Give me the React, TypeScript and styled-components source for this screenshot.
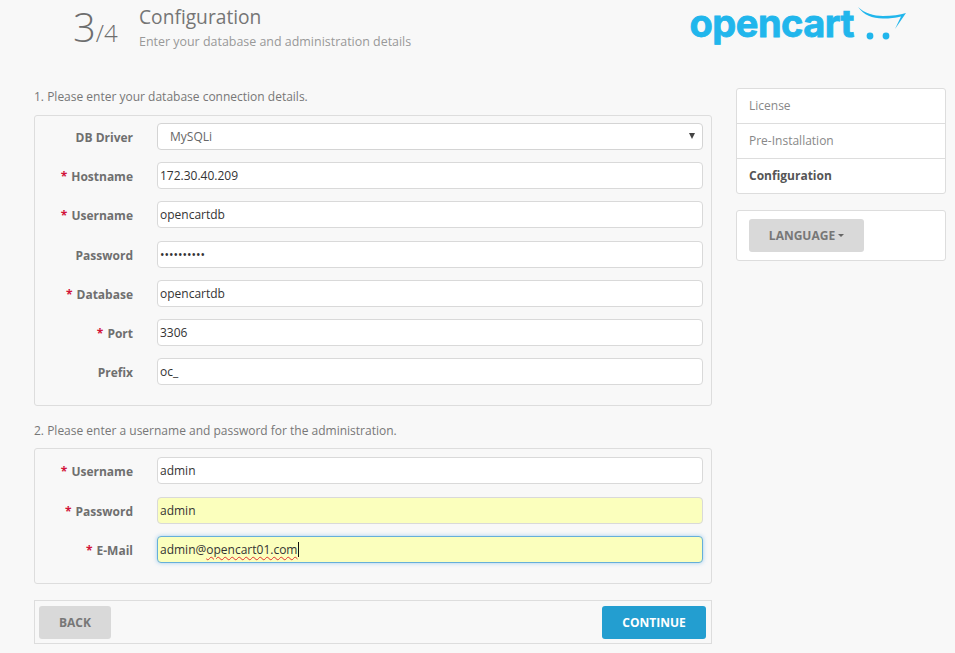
import React from "react";
import styled, { createGlobalStyle } from "styled-components";

const GlobalStyle = createGlobalStyle`
  html, body {
    margin: 0;
    padding: 0;
    background: #f8f8f8;
  }
  body {
    font-family: "Open Sans", "Liberation Sans", sans-serif;
    font-size: 12px;
    color: #666;
    overflow: hidden;
  }
  * {
    box-sizing: border-box;
  }
`;

const Page = styled.div`
  width: 955px;
  height: 653px;
  overflow: hidden;
`;

const Header = styled.header`
  display: flex;
  justify-content: space-between;
  height: 88px;
  padding: 0 49px 0 73px;
`;

const Steps = styled.div`
  display: flex;
  align-items: flex-start;
`;

const StepNumber = styled.div`
  width: 66px;
  font-size: 40px;
  line-height: 54px;
  font-weight: 300;
  color: #6e6e6e;

  small {
    font-size: 24px;
    font-weight: 300;
  }
`;

const StepText = styled.div`
  padding-top: 3px;
`;

const StepTitle = styled.h1`
  margin: 0;
  font-size: 19.2px;
  line-height: 27px;
  font-weight: 400;
  color: #757575;
`;

const StepHint = styled.p`
  margin: 3px 0 0;
  font-size: 12.45px;
  line-height: 17px;
  color: #999;
`;

const Logo = styled.div`
  display: flex;
  align-items: flex-start;
`;

const LogoText = styled.span`
  font-family: "Inter", "Lato", sans-serif;
  font-size: 38px;
  line-height: 46px;
  font-weight: 700;
  letter-spacing: -0.5px;
  color: #21b6ec;
  -webkit-text-stroke: 0.8px #21b6ec;
`;

const Content = styled.div`
  display: grid;
  grid-template-columns: 678px 210px;
  column-gap: 24px;
  padding-left: 34px;
`;

const Main = styled.main`
  display: flex;
  flex-direction: column;
`;

const Legend = styled.p<{ $height: number }>`
  margin: 0;
  height: ${(p) => p.$height}px;
  font-size: 12px;
  line-height: 18px;
  color: #777;
`;

const Fieldset = styled.div<{
  $gap: number;
  $padTop: number;
  $padBottom: number;
  $mb: number;
}>`
  display: flex;
  flex-direction: column;
  gap: ${(p) => p.$gap}px;
  margin-bottom: ${(p) => p.$mb}px;
  padding: ${(p) => p.$padTop}px 8px ${(p) => p.$padBottom}px 0;
  border: 1px solid #ddd;
  border-radius: 3px;
`;

const Row = styled.div`
  display: grid;
  grid-template-columns: 98px 546px;
  column-gap: 24px;
  align-items: center;
`;

const Label = styled.label`
  padding-top: 2px;
  text-align: right;
  font-size: 12px;
  font-weight: 700;
  color: #6f6f6f;
`;

const Star = styled.span`
  color: #d2143a;
  margin-right: 4px;
`;

const Input = styled.input<{ $autofill?: boolean }>`
  display: block;
  width: 100%;
  height: 27px;
  padding: 0 2px;
  font: 12px "Open Sans", sans-serif;
  color: #333;
  background: ${(p) => (p.$autofill ? "#fbffbd" : "#fff")};
  border: 1px solid #d9d9d9;
  border-radius: 4px;
  outline: none;
`;

const SelectBox = styled.div`
  position: relative;
  height: 27px;
  padding-left: 12px;
  font-size: 12px;
  line-height: 26px;
  color: #666;
  background: #fff;
  border: 1px solid #d4d4d4;
  border-radius: 4px;

  &::after {
    content: "";
    position: absolute;
    top: 9px;
    right: 7px;
    border-style: solid;
    border-width: 6px 3px 0;
    border-color: #444 transparent transparent;
  }
`;

const FocusedField = styled.div`
  height: 27px;
  padding: 0 2px;
  font-size: 12px;
  line-height: 25px;
  color: #333;
  background: #fbffbd;
  border: 1px solid #66afd9;
  border-radius: 4px;
  box-shadow: 0 0 4px rgba(102, 175, 233, 0.6);
  white-space: nowrap;
`;

const Misspelled = styled.span`
  text-decoration: underline wavy #e03030 1px;
  text-underline-offset: 2px;
`;

const Caret = styled.span`
  display: inline-block;
  width: 1px;
  height: 15px;
  margin-left: 1px;
  vertical-align: -3px;
  background: #111;
`;

const Actions = styled.div`
  display: flex;
  justify-content: space-between;
  height: 44px;
  padding: 5px 5px 0 4px;
  border: 1px solid #ddd;
`;

const Button = styled.button<{ $primary?: boolean }>`
  height: 33px;
  width: ${(p) => (p.$primary ? 104 : 72)}px;
  padding: 0;
  font: 700 12px "Open Sans", sans-serif;
  color: ${(p) => (p.$primary ? "#fff" : "#777")};
  background: ${(p) => (p.$primary ? "#239ed0" : "#d9d9d9")};
  border: 0;
  border-radius: 3px;
`;

const Side = styled.aside`
  display: flex;
  flex-direction: column;
  gap: 16px;
`;

const Steplist = styled.ul`
  margin: 0;
  padding: 0;
  list-style: none;
  background: #fff;
  border: 1px solid #ddd;
  border-radius: 3px;
`;

const StepItem = styled.li<{ $active?: boolean }>`
  height: 35px;
  padding-left: 12px;
  font-size: 12px;
  line-height: 34px;
  font-weight: ${(p) => (p.$active ? 700 : 400)};
  color: ${(p) => (p.$active ? "#555" : "#888")};
  border-top: 1px solid #ddd;

  &:first-child {
    height: 34px;
    border-top: 0;
  }
`;

const LanguageBox = styled.div`
  height: 51px;
  padding: 8px 12px;
  background: #fff;
  border: 1px solid #ddd;
  border-radius: 3px;
`;

const LanguageButton = styled(Button)`
  display: flex;
  align-items: center;
  justify-content: center;
  gap: 3px;
  width: 115px;

  &::after {
    content: "";
    border-style: solid;
    border-width: 3px 3px 0;
    border-color: #666 transparent transparent;
  }
`;

const noop = () => undefined;

const Field: React.FC<{
  label: string;
  required?: boolean;
  children: React.ReactNode;
}> = ({ label, required, children }) => (
  <Row>
    <Label>
      {required && <Star>*</Star>}
      {label}
    </Label>
    {children}
  </Row>
);

const TextField: React.FC<{
  label: string;
  value: string;
  required?: boolean;
  type?: string;
  autofill?: boolean;
}> = ({ label, value, required, type = "text", autofill }) => (
  <Field label={label} required={required}>
    <Input type={type} value={value} onChange={noop} $autofill={autofill} />
  </Field>
);

const App: React.FC = () => {
  return (
    <Page>
      <GlobalStyle />
      <Header>
        <Steps>
          <StepNumber>
            3<small>/4</small>
          </StepNumber>
          <StepText>
            <StepTitle>Configuration</StepTitle>
            <StepHint>Enter your database and administration details</StepHint>
          </StepText>
        </Steps>
        <Logo>
          <LogoText>opencart</LogoText>
          <svg width="52" height="42" viewBox="0 0 52 42" aria-hidden="true">
            <path
              d="M4 7 C10 13 20 16 29 16 C38 16 46 15 52 13 L41 29 L47 16.5 C38 18.5 33 18.5 29 18.5 C18 18.5 10 15 4 7 Z"
              fill="#21b6ec"
            />
            <circle cx="16" cy="36" r="3.4" fill="#21b6ec" />
            <circle cx="32" cy="36" r="3.4" fill="#21b6ec" />
          </svg>
        </Logo>
      </Header>
      <Content>
        <Main>
          <Legend $height={27}>1. Please enter your database connection details.</Legend>
          <Fieldset $gap={12.2} $padTop={7} $padBottom={19.8} $mb={16}>
            <Field label="DB Driver">
              <SelectBox>MySQLi</SelectBox>
            </Field>
            <TextField label="Hostname" value="172.30.40.209" required />
            <TextField label="Username" value="opencartdb" required />
            <TextField label="Password" value="opencartdb" type="password" />
            <TextField label="Database" value="opencartdb" required />
            <TextField label="Port" value="3306" required />
            <TextField label="Prefix" value="oc_" />
          </Fieldset>
          <Legend $height={26}>2. Please enter a username and password for the administration.</Legend>
          <Fieldset $gap={12.6} $padTop={8} $padBottom={19.8} $mb={16}>
            <TextField label="Username" value="admin" required />
            <TextField label="Password" value="admin" required autofill />
            <Field label="E-Mail" required>
              <FocusedField>
                admin@<Misspelled>opencart01.com</Misspelled>
                <Caret />
              </FocusedField>
            </Field>
          </Fieldset>
          <Actions>
            <Button>BACK</Button>
            <Button $primary>CONTINUE</Button>
          </Actions>
        </Main>
        <Side>
          <Steplist>
            <StepItem>License</StepItem>
            <StepItem>Pre-Installation</StepItem>
            <StepItem $active>Configuration</StepItem>
          </Steplist>
          <LanguageBox>
            <LanguageButton>LANGUAGE</LanguageButton>
          </LanguageBox>
        </Side>
      </Content>
    </Page>
  );
};

export default App;
